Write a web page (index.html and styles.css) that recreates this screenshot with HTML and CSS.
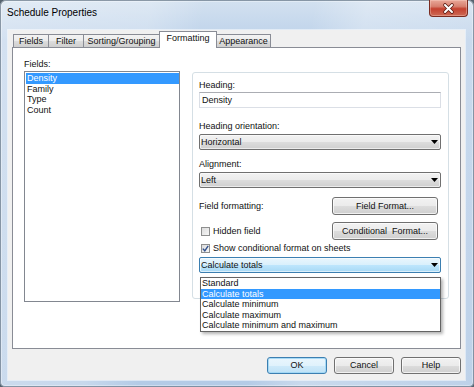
FILE: index.html
```html
<!DOCTYPE html>
<html>
<head>
<meta charset="utf-8">
<link rel="stylesheet" href="styles.css">
</head>
<body>
<div class="window">
  <div class="titlebar">
    <span class="title">Schedule Properties</span>
    <div class="close">
      <svg width="39" height="17" viewBox="0 0 39 17">
        <path d="M16 5 L23 12 M23 5 L16 12" stroke="#5a1c14" stroke-width="3.6" stroke-linecap="round"/>
        <path d="M16 5 L23 12 M23 5 L16 12" stroke="#ffffff" stroke-width="2" stroke-linecap="round"/>
      </svg>
    </div>
  </div>
  <div class="client">
    <div class="tabs">
      <div class="tab tab-fields">Fields</div>
      <div class="tab tab-filter">Filter</div>
      <div class="tab tab-sorting">Sorting/Grouping</div>
      <div class="tab tab-formatting active">Formatting</div>
      <div class="tab tab-appearance">Appearance</div>
    </div>
    <div class="panel">
      <div class="fields-col">
        <div class="lbl">Fields:</div>
        <div class="listbox">
          <div class="item sel">Density</div>
          <div class="item">Family</div>
          <div class="item">Type</div>
          <div class="item">Count</div>
        </div>
      </div>
      <div class="group">
        <div class="lbl lbl-first">Heading:</div>
        <div class="textbox">Density</div>
        <div class="lbl lbl-orient">Heading orientation:</div>
        <div class="combo"><span>Horizontal</span><svg class="arrow" width="7" height="4" viewBox="0 0 7 4"><path d="M0 0 H7 L3.5 4 Z" fill="#000"/></svg></div>
        <div class="lbl lbl-align">Alignment:</div>
        <div class="combo"><span>Left</span><svg class="arrow" width="7" height="4" viewBox="0 0 7 4"><path d="M0 0 H7 L3.5 4 Z" fill="#000"/></svg></div>
        <div class="row row-format">
          <span>Field formatting:</span>
          <button class="btn btn-side">Field Format...</button>
        </div>
        <div class="row row-cond">
          <span class="check"><span class="box"></span>Hidden field</span>
          <button class="btn btn-side">Conditional&nbsp; Format...</button>
        </div>
        <div class="check check-show">
          <span class="box"><svg width="7" height="7" viewBox="0 0 7 7"><path d="M0.8 3.6 L2.8 5.8 L6.2 0.8" fill="none" stroke="#31508c" stroke-width="1.4"/></svg></span>Show conditional format on sheets
        </div>
        <div class="combo-wrap">
          <div class="combo focus"><span>Calculate totals</span><svg class="arrow" width="7" height="4" viewBox="0 0 7 4"><path d="M0 0 H7 L3.5 4 Z" fill="#000"/></svg></div>
          <div class="dropdown">
            <div class="ditem">Standard</div>
            <div class="ditem sel">Calculate totals</div>
            <div class="ditem">Calculate minimum</div>
            <div class="ditem">Calculate maximum</div>
            <div class="ditem">Calculate minimum and maximum</div>
          </div>
        </div>
      </div>
    </div>
    <div class="buttons">
      <button class="btn btn-bottom btn-default">OK</button>
      <button class="btn btn-bottom">Cancel</button>
      <button class="btn btn-bottom">Help</button>
    </div>
  </div>
</div>
</body>
</html>
```

FILE: styles.css
```css
html, body {
  margin: 0;
  padding: 0;
}
body {
  width: 474px;
  height: 387px;
  overflow: hidden;
  background: #55636f;
  font-family: "Liberation Sans", Arial, sans-serif;
  font-size: 9px;
  color: #111;
}
.window {
  width: 474px;
  height: 387px;
  box-sizing: border-box;
  display: flex;
  flex-direction: column;
  padding-bottom: 7px;
  border-radius: 6px 6px 5px 5px;
  background:
    linear-gradient(100deg, rgba(255,255,255,0.35) 0%, rgba(255,255,255,0.25) 28%, rgba(255,255,255,0) 38%, rgba(255,255,255,0) 58%, rgba(255,255,255,0.28) 68%, rgba(255,255,255,0.12) 100%),
    linear-gradient(#d3e1f0, #bdd2ea 40px, #b4cbe6);
  box-shadow: inset 0 0 0 1px rgba(60,80,100,0.55), inset 0 0 0 2px rgba(255,255,255,0.35);
}
.titlebar {
  height: 30px;
  flex: none;
  display: flex;
  justify-content: space-between;
  align-items: flex-start;
  padding: 0 6px 0 7px;
}
.title {
  font-size: 10px;
  line-height: 12px;
  margin-top: 7px;
  color: #000;
}
.close {
  width: 39px;
  height: 17px;
  box-sizing: border-box;
  border: 1px solid #7a2b20;
  border-top: none;
  border-radius: 0 0 4px 4px;
  background: linear-gradient(#e9a899 0%, #d7806f 40%, #c4412f 55%, #cd6a55 100%);
  box-shadow: inset 0 0 0 1px rgba(255,220,210,0.35);
  position: relative;
}
.close svg {
  position: absolute;
  left: -1px;
  top: 0;
}
.client {
  flex: 1;
  margin: 0 9px 0 8px;
  background: #f0f0f0;
  padding: 0 4px;
  display: flex;
  flex-direction: column;
  box-shadow: 0 0 0 1px rgba(255,255,255,0.5);
}
.tabs {
  height: 17px;
  flex: none;
  display: flex;
  align-items: flex-end;
  padding-left: 1px;
}
.tab {
  box-sizing: border-box;
  height: 13px;
  border: 1px solid #898c95;
  border-bottom: none;
  margin-right: -1px;
  padding-top: 1px;
  line-height: 11px;
  text-align: center;
  white-space: nowrap;
  background: linear-gradient(#f3f3f3 0%, #ebebeb 50%, #dddddd 50%, #cfcfcf 100%);
}
.tab.active {
  height: 17px;
  margin-bottom: -1px;
  background: #ffffff;
  position: relative;
  z-index: 2;
}
.tab-fields { width: 36px; }
.tab-filter { width: 36px; }
.tab-sorting { width: 77px; }
.tab-formatting { width: 58px; }
.tab-appearance { width: 55px; }

.panel {
  height: 302px;
  flex: none;
  box-sizing: border-box;
  border: 1px solid #898c95;
  background: #ffffff;
  display: flex;
  align-items: flex-start;
  gap: 12px;
  padding: 11px 11px 0 11px;
}
.lbl {
  line-height: 11px;
  height: 11px;
  white-space: nowrap;
}
.fields-col {
  width: 156px;
  display: flex;
  flex-direction: column;
}
.fields-col .lbl {
  margin-bottom: 1px;
}
.listbox {
  height: 231px;
  box-sizing: border-box;
  border: 1px solid #828790;
  background: #fff;
  padding: 1px 0 1px 1px;
}
.item {
  line-height: 10.6px;
  height: 10.6px;
  padding-left: 1px;
}
.item.sel, .ditem.sel {
  background: #3399ff;
  color: #fff;
}
.group {
  width: 257px;
  height: 227px;
  margin-top: 13px;
  box-sizing: border-box;
  border: 1px solid #d5dfe5;
  border-radius: 3px;
  padding: 7px 7px 0 6px;
  display: flex;
  flex-direction: column;
}
.lbl-first { margin-bottom: 1px; }
.lbl-orient { margin-top: 13px; margin-bottom: 2px; }
.lbl-align { margin-top: 9px; margin-bottom: 2px; }
.textbox {
  height: 16px;
  box-sizing: border-box;
  border: 1px solid #dbdfe6;
  border-top-color: #abadb3;
  background: #fff;
  padding-left: 2px;
  line-height: 14px;
}
.combo {
  height: 16px;
  box-sizing: border-box;
  border: 1px solid #707070;
  border-radius: 2px;
  background: linear-gradient(#f2f2f2 0%, #ebebeb 50%, #dddddd 50%, #cfcfcf 100%);
  box-shadow: inset 0 0 0 1px rgba(255,255,255,0.6);
  display: flex;
  align-items: center;
  justify-content: space-between;
  padding: 0 2px 0 1px;
  line-height: 14px;
}
.combo.focus {
  border-color: #3c7fb1;
  background: linear-gradient(#eaf6fd 0%, #d9f0fc 50%, #bee6fd 50%, #a7d9f5 100%);
}
.arrow {
  display: block;
  flex: none;
}
.row {
  height: 18px;
  display: flex;
  align-items: center;
  justify-content: space-between;
}
.row-format { margin-top: 9px; }
.row-cond { margin-top: 7px; }
.btn {
  font-family: inherit;
  font-size: 9px;
  color: #111;
  box-sizing: border-box;
  border: 1px solid #707070;
  border-radius: 3px;
  background: linear-gradient(#f2f2f2 0%, #ebebeb 50%, #dddddd 50%, #cfcfcf 100%);
  box-shadow: inset 0 0 0 1px rgba(255,255,255,0.7);
  padding: 0;
  margin: 0;
  line-height: 11px;
  white-space: nowrap;
}
.btn-side {
  width: 106px;
  height: 18px;
  margin-right: 3px;
}
.check {
  display: flex;
  align-items: center;
  height: 11px;
  line-height: 11px;
  white-space: nowrap;
}
.check-show { margin-top: 3px; }
.box {
  width: 9px;
  height: 9px;
  box-sizing: border-box;
  border: 1px solid #8e8f8f;
  background: linear-gradient(135deg, #dcdcdc, #f6f6f6);
  margin: 0 3px 0 2px;
  display: flex;
  align-items: center;
  justify-content: center;
  flex: none;
}
.box svg { display: block; }
.combo-wrap {
  margin-top: 3px;
  position: relative;
}
.dropdown {
  position: absolute;
  left: 1px;
  top: 20px;
  width: 241px;
  box-sizing: border-box;
  border: 1px solid #646464;
  background: #fff;
  box-shadow: 2px 2px 3px rgba(0,0,0,0.3);
  z-index: 5;
}
.ditem {
  height: 10.6px;
  line-height: 10.6px;
  padding-left: 1px;
  white-space: nowrap;
}
.buttons {
  margin-top: 8px;
  display: flex;
  justify-content: flex-end;
  gap: 7px;
}
.btn-bottom {
  width: 60px;
  height: 17px;
}
.btn-default {
  border-color: #3c7fb1;
  background: linear-gradient(#eaf6fd 0%, #e0f2fc 50%, #cfeafa 50%, #bfe2f6 100%);
  box-shadow: inset 0 0 0 1px rgba(160,215,245,0.9);
}
```
